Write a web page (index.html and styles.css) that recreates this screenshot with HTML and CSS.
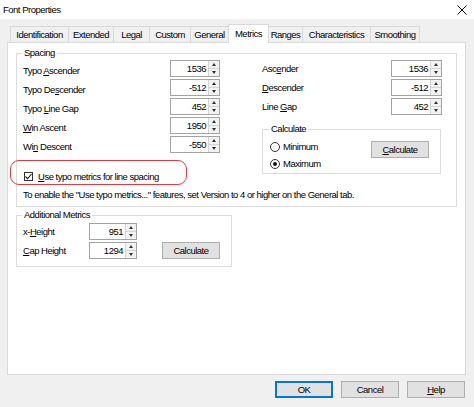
FILE: index.html
```html
<!DOCTYPE html>
<html>
<head>
<meta charset="utf-8">
<link rel="stylesheet" href="styles.css">
</head>
<body>
<div class="window">
  <div class="titlebar">
    <span class="title">Font Properties</span>
    <svg class="close" width="10" height="10" viewBox="0 0 10 10"><path d="M0.5 0.5 L9.5 9.5 M9.5 0.5 L0.5 9.5" stroke="#000" stroke-width="1" fill="none"/></svg>
  </div>

  <div class="tabs">
    <div class="tab w-ident">Identification</div>
    <div class="tab w-ext">Extended</div>
    <div class="tab w-legal">Legal</div>
    <div class="tab w-custom">Custom</div>
    <div class="tab w-general">General</div>
    <div class="tab selected w-metrics">Metrics</div>
    <div class="tab w-ranges">Ranges</div>
    <div class="tab w-chars">Characteristics</div>
    <div class="tab w-smooth">Smoothing</div>
  </div>

  <div class="panel">
    <div class="group spacing">
      <div class="group-title">Spacing</div>
      <div class="spacing-grid">
        <div class="col-left">
          <div class="rows rows-left">
            <span class="lbl lbl-low">Typo <u>A</u>scender</span>
            <div class="spin"><span class="val">1536</span><span class="arrows"><span class="up"><i></i></span><span class="down"><i></i></span></span></div>
            <span class="lbl lbl-low">Typo De<u>s</u>cender</span>
            <div class="spin"><span class="val">-512</span><span class="arrows"><span class="up"><i></i></span><span class="down"><i></i></span></span></div>
            <span class="lbl lbl-low">Typo <u>L</u>ine Gap</span>
            <div class="spin"><span class="val">452</span><span class="arrows"><span class="up"><i></i></span><span class="down"><i></i></span></span></div>
            <span class="lbl lbl-low"><u>W</u>in Ascent</span>
            <div class="spin"><span class="val">1950</span><span class="arrows"><span class="up"><i></i></span><span class="down"><i></i></span></span></div>
            <span class="lbl lbl-low">Wi<u>n</u> Descent</span>
            <div class="spin"><span class="val">-550</span><span class="arrows"><span class="up"><i></i></span><span class="down"><i></i></span></span></div>
          </div>
          <div class="check-row">
            <span class="checkbox"><svg width="9" height="9" viewBox="0 0 9 9"><path d="M1.5 4.5 L3.6 6.6 L7.6 2" stroke="#222" stroke-width="1.1" fill="none"/></svg></span>
            <span><u>U</u>se typo metrics for line spacing</span>
          </div>
        </div>
        <div class="col-right">
          <div class="rows rows-right">
            <span class="lbl">Asc<u>e</u>nder</span>
            <div class="spin"><span class="val">1536</span><span class="arrows"><span class="up"><i></i></span><span class="down"><i></i></span></span></div>
            <span class="lbl"><u>D</u>escender</span>
            <div class="spin"><span class="val">-512</span><span class="arrows"><span class="up"><i></i></span><span class="down"><i></i></span></span></div>
            <span class="lbl">Line <u>G</u>ap</span>
            <div class="spin"><span class="val">452</span><span class="arrows"><span class="up"><i></i></span><span class="down"><i></i></span></span></div>
          </div>
          <div class="group calc">
            <div class="group-title">Calculate</div>
            <div class="calc-body">
              <div class="radios">
                <div class="radio-row"><span class="radio"></span><span>Minimum</span></div>
                <div class="radio-row"><span class="radio on"></span><span>Maximum</span></div>
              </div>
              <div class="btn calc-btn"><u>C</u>alculate</div>
            </div>
          </div>
        </div>
      </div>
      <div class="note">To enable the "Use typo metrics..." features, set Version to 4 or higher on the General tab.</div>
    </div>

    <div class="group additional">
      <div class="group-title">Additional Metrics</div>
      <div class="add-grid">
        <span class="lbl">x-<u>H</u>eight</span>
        <div class="spin"><span class="val">951</span><span class="arrows"><span class="up"><i></i></span><span class="down"><i></i></span></span></div>
        <span></span>
        <span class="lbl"><u>C</u>ap Height</span>
        <div class="spin"><span class="val">1294</span><span class="arrows"><span class="up"><i></i></span><span class="down"><i></i></span></span></div>
        <div class="btn add-btn">Calculate</div>
      </div>
    </div>

    <div class="highlight"></div>
  </div>

  <div class="footer">
    <div class="btn default">OK</div>
    <div class="btn">Cancel</div>
    <div class="btn"><u>H</u>elp</div>
  </div>
</div>
</body>
</html>
```

FILE: styles.css
```css
html, body {
  margin: 0;
  padding: 0;
}
body {
  width: 474px;
  height: 407px;
  overflow: hidden;
  background: #f0f0f0;
  font-family: "Liberation Sans", Arial, sans-serif;
  font-size: 9.5px;
  letter-spacing: -0.5px;
  color: #000;
}
u { text-decoration-thickness: 1px; text-underline-offset: 1px; }

.titlebar {
  height: 19px;
  background: #fff;
  display: flex;
  align-items: center;
  justify-content: space-between;
  padding: 0 7px 0 3px;
}
.close { margin-top: 1px; }

.tabs {
  display: flex;
  align-items: flex-end;
  height: 18px;
  margin-top: 5px;
  padding-left: 10px;
}
.tab {
  height: 15px;
  line-height: 16px;
  border: 1px solid #d9d9d9;
  border-bottom: none;
  background: #f0f0f0;
  text-align: center;
  margin-right: -1px;
  box-sizing: content-box;
}
.tab.selected {
  height: 18px;
  line-height: 17px;
  background: #fff;
  margin-bottom: -1px;
  position: relative;
  z-index: 2;
}
.w-ident { width: 57px; }
.w-ext { width: 44px; }
.w-legal { width: 35px; }
.w-custom { width: 40px; }
.w-general { width: 37px; }
.w-metrics { width: 39px; }
.w-ranges { width: 33px; }
.w-chars { width: 67px; }
.w-smooth { width: 48px; }

.panel {
  position: relative;
  margin-left: 7px;
  width: 457px;
  height: 331px;
  border: 1px solid #d9d9d9;
  background: #fff;
}

.group {
  border: 1px solid #dcdcdc;
}
.group-title {
  display: block;
  width: fit-content;
  height: 14px;
  line-height: 14px;
  margin: -8px 0 0 5px;
  padding: 0 2px;
  background: #fff;
}

.spacing {
  margin: 10px 0 0 8px;
  width: 439px;
  padding-bottom: 4px;
}
.spacing-grid {
  display: grid;
  grid-template-columns: 197px 180px;
  column-gap: 42px;
  padding-left: 6px;
  align-items: start;
}
.rows {
  display: grid;
  row-gap: 2px;
  grid-auto-rows: 17px;
  align-items: center;
}
.rows-left { grid-template-columns: 147px 50px; }
.rows-right { grid-template-columns: 129px 51px; }
.lbl { white-space: nowrap; }
.lbl-low { padding-top: 3px; }

.spin {
  display: flex;
  height: 15px;
  border: 1px solid #a3a3a3;
  background: #fff;
}
.val {
  flex: 1;
  text-align: right;
  line-height: 15px;
  padding-right: 2px;
}
.arrows {
  width: 10px;
  display: flex;
  flex-direction: column;
  background: #f2f2f2;
  border-left: 1px solid #d4d4d4;
}
.arrows > span {
  flex: 1;
  display: flex;
  align-items: center;
  justify-content: center;
}
.arrows .up { border-bottom: 1px solid #d4d4d4; }
.up i {
  width: 0; height: 0;
  border-left: 2.5px solid transparent;
  border-right: 2.5px solid transparent;
  border-bottom: 3px solid #333;
}
.down i {
  width: 0; height: 0;
  border-left: 2.5px solid transparent;
  border-right: 2.5px solid transparent;
  border-top: 3px solid #333;
}

.check-row {
  display: flex;
  align-items: center;
  gap: 5px;
  height: 14px;
  margin-top: 16px;
  padding-left: 1px;
}
.checkbox {
  width: 9px;
  height: 9px;
  border: 1px solid #333;
  box-sizing: border-box;
  display: flex;
  align-items: center;
  justify-content: center;
}
.checkbox svg { display: block; flex: none; }

.calc {
  margin-top: 14px;
  width: 177px;
  padding-bottom: 1px;
}
.calc .group-title { margin-left: 6px; }
.calc-body {
  display: flex;
  align-items: flex-start;
  padding-left: 7px;
  margin-top: 2px;
}
.radio-row {
  display: flex;
  align-items: center;
  gap: 3px;
  height: 17px;
}
.radio {
  width: 10px;
  height: 10px;
  border: 1px solid #333;
  border-radius: 50%;
  box-sizing: border-box;
  display: flex;
  align-items: center;
  justify-content: center;
}
.radio.on::after {
  content: "";
  width: 4px;
  height: 4px;
  border-radius: 50%;
  background: #111;
}

.btn {
  width: 56px;
  height: 15px;
  line-height: 15px;
  border: 1px solid #adadad;
  background: #e1e1e1;
  text-align: center;
}
.calc-btn {
  margin-left: auto;
  margin-right: 11px;
  margin-top: 3px;
}

.note {
  margin-top: 5px;
  padding-left: 6px;
  height: 14px;
  line-height: 14px;
  white-space: nowrap;
}

.additional {
  margin: 8px 0 0 8px;
  width: 214px;
  padding-bottom: 7px;
}
.add-grid {
  display: grid;
  grid-template-columns: 66px 48px 83px;
  grid-auto-rows: 17px;
  row-gap: 2px;
  align-items: center;
  padding-left: 6px;
  margin-top: 1px;
}
.add-btn { justify-self: end; }

.highlight {
  position: absolute;
  left: 2px;
  top: 117px;
  width: 175px;
  height: 23px;
  border: 1.5px solid #e03a44;
  border-radius: 9px;
}

.footer {
  display: flex;
  justify-content: flex-end;
  gap: 8px;
  padding: 6px 9px 0 0;
}
.btn.default {
  border-color: #0078d7;
  box-shadow: inset 0 0 0 1px #0078d7;
}
```
